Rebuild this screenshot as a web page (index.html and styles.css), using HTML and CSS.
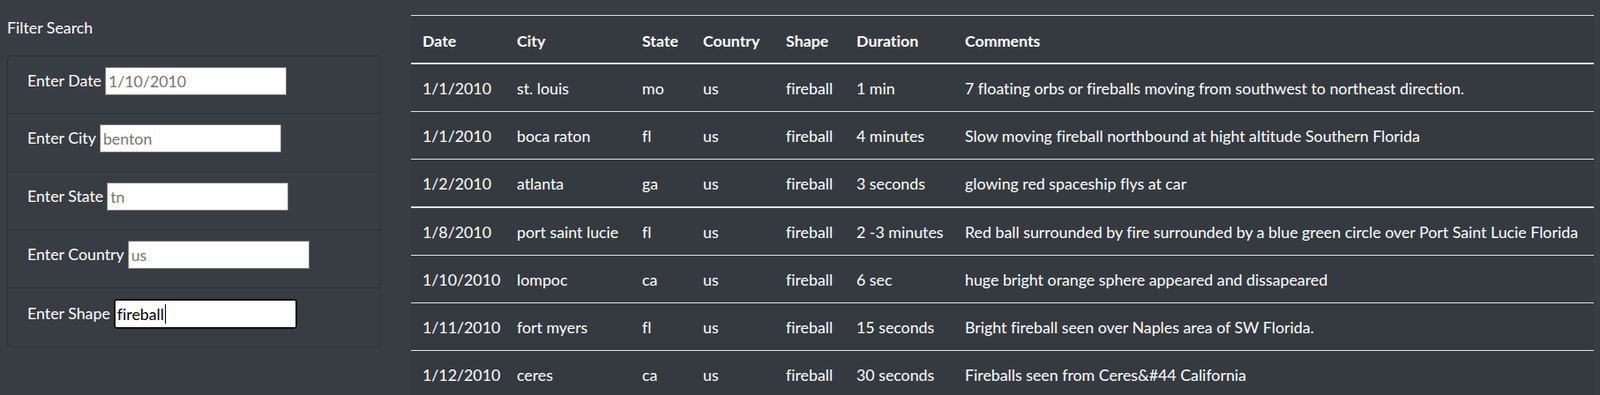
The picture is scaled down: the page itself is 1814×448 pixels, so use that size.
FILE: index.html
```html
<!DOCTYPE html>
<html lang="en">
<head>
<meta charset="utf-8">
<title>UFO Sightings</title>
<link rel="stylesheet" href="styles.css">
</head>
<body>
<div class="page">
  <aside class="sidebar">
    <div class="title">Filter Search</div>
    <ul class="filters">
      <li class="filter"><label for="f-date">Enter Date</label><input id="f-date" class="field" type="text" placeholder="1/10/2010"></li>
      <li class="filter"><label for="f-city">Enter City</label><input id="f-city" class="field" type="text" placeholder="benton"></li>
      <li class="filter"><label for="f-state">Enter State</label><input id="f-state" class="field" type="text" placeholder="tn"></li>
      <li class="filter"><label for="f-country">Enter Country</label><input id="f-country" class="field" type="text" placeholder="us"></li>
      <li class="filter"><label for="f-shape">Enter Shape</label><span class="field-wrap"><input id="f-shape" class="field is-focused" type="text" value="fireball"><span class="caret"></span></span></li>
    </ul>
  </aside>
  <main class="content">
    <table class="ufo">
      <colgroup>
        <col class="c-date"><col class="c-city"><col class="c-state"><col class="c-country"><col class="c-shape"><col class="c-duration"><col class="c-comments">
      </colgroup>
      <thead>
        <tr><th>Date</th><th>City</th><th>State</th><th>Country</th><th>Shape</th><th>Duration</th><th>Comments</th></tr>
      </thead>
      <tbody>
        <tr><td>1/1/2010</td><td>st. louis</td><td>mo</td><td>us</td><td>fireball</td><td>1 min</td><td>7 floating orbs or fireballs moving from southwest to northeast direction.</td></tr>
        <tr><td>1/1/2010</td><td>boca raton</td><td>fl</td><td>us</td><td>fireball</td><td>4 minutes</td><td>Slow moving fireball northbound at hight altitude Southern Florida</td></tr>
        <tr><td>1/2/2010</td><td>atlanta</td><td>ga</td><td>us</td><td>fireball</td><td>3 seconds</td><td>glowing red spaceship flys at car</td></tr>
      </tbody>
      <tbody>
        <tr><td>1/8/2010</td><td>port saint lucie</td><td>fl</td><td>us</td><td>fireball</td><td>2 -3 minutes</td><td>Red ball surrounded by fire surrounded by a blue green circle over Port Saint Lucie Florida</td></tr>
        <tr><td>1/10/2010</td><td>lompoc</td><td>ca</td><td>us</td><td>fireball</td><td>6 sec</td><td>huge bright orange sphere appeared and dissapeared</td></tr>
        <tr><td>1/11/2010</td><td>fort myers</td><td>fl</td><td>us</td><td>fireball</td><td>15 seconds</td><td>Bright fireball seen over Naples area of SW Florida.</td></tr>
        <tr><td>1/12/2010</td><td>ceres</td><td>ca</td><td>us</td><td>fireball</td><td>30 seconds</td><td>Fireballs seen from Ceres&amp;#44 California</td></tr>
      </tbody>
    </table>
  </main>
</div>
</body>
</html>
```
FILE: styles.css
```css
html, body {
  margin: 0;
  padding: 0;
  background: #383c43;
  color: #ffffff;
  font-family: Lato, "Open Sans", sans-serif;
  font-size: 17.8px;
  line-height: 26px;
  font-variant-ligatures: none;
  overflow: hidden;
}

.page {
  display: flex;
  align-items: flex-start;
  gap: 34px;
}

.sidebar {
  width: 424px;
  margin-left: 8px;
  flex: none;
}

.title {
  padding-top: 18px;
  margin-bottom: 19px;
}

.filters {
  list-style: none;
  margin: 0;
  padding: 0;
  border: 1px solid #2d3137;
  border-radius: 4px;
}

.filter {
  display: flex;
  align-items: center;
  gap: 4px;
  padding: 12px 22px 21px;
  border-bottom: 1px solid #2d3137;
}

.filter:first-child {
  padding-bottom: 20px;
}

.filter:last-child {
  padding-bottom: 20px;
  border-bottom: none;
}

.filter label {
  position: relative;
  top: -1px;
}

.field {
  box-sizing: border-box;
  width: 206px;
  height: 32px;
  margin: 0;
  padding: 0 3px;
  border: 1px solid #767676;
  border-radius: 0;
  background: #ffffff;
  color: #000000;
  font-family: inherit;
  font-size: 17.8px;
  font-variant-ligatures: none;
}

.field::placeholder {
  color: #757575;
}

.field-wrap {
  position: relative;
  display: block;
}

.field.is-focused {
  width: 208px;
  height: 34px;
  outline: 2px solid #101010;
  outline-offset: -2px;
  border-radius: 3px;
  border-color: #ffffff;
}

.caret {
  position: absolute;
  left: 58px;
  top: 6px;
  width: 1px;
  height: 22px;
  background: #000000;
}

.content {
  flex: 1;
  min-width: 0;
  padding-top: 17px;
}

.ufo {
  width: 1341px;
  table-layout: fixed;
  border-collapse: collapse;
  background: #343a40;
  color: #ffffff;
}

.c-date { width: 107px; }
.c-city { width: 142px; }
.c-state { width: 69px; }
.c-country { width: 94px; }
.c-shape { width: 80px; }
.c-duration { width: 123px; }
.c-comments { width: 726px; }

.ufo th,
.ufo td {
  padding: 13.5px 13px 12.5px;
  text-align: left;
  vertical-align: top;
  line-height: 27px;
  border-top: 1px solid #dee2e6;
  white-space: nowrap;
}

.ufo th {
  padding-top: 15px;
  padding-bottom: 11px;
  font-weight: 700;
  border-bottom: 2px solid #dee2e6;
}

.ufo tbody + tbody {
  border-top: 2px solid #dee2e6;
}
```
